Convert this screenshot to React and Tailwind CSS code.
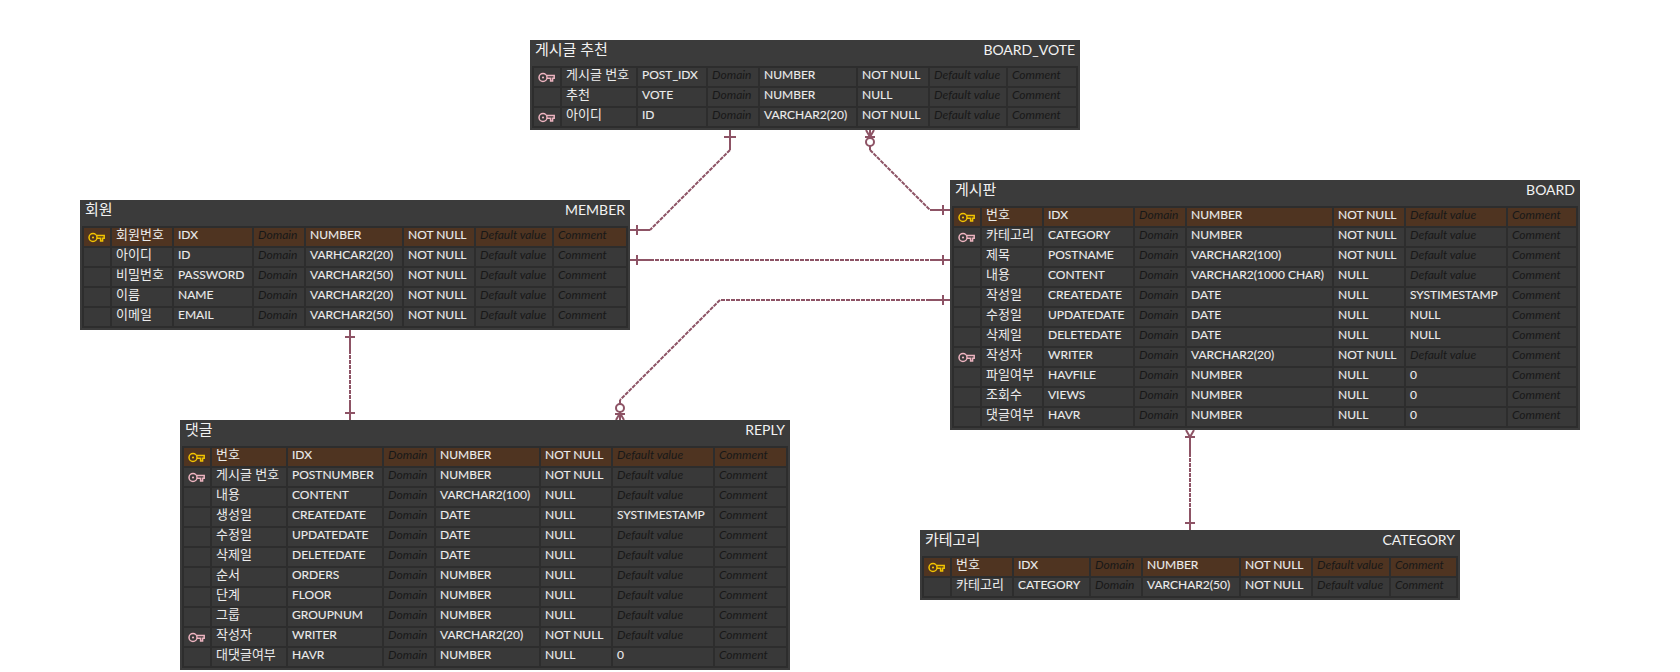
const tables = [
  {
    title: '게시글 추천', name: 'BOARD_VOTE', pos: 'left-[530px] top-[40px] w-[550px]',
    cols: 'grid-cols-[26px_74px_68px_50px_96px_70px_76px_68px]',
    rows: [
      ['fk', '게시글 번호', 'POST_IDX', 'NUMBER', 'NOT NULL'],
      ['', '추천', 'VOTE', 'NUMBER', 'NULL'],
      ['fk', '아이디', 'ID', 'VARCHAR2(20)', 'NOT NULL'],
    ],
  },
  {
    title: '회원', name: 'MEMBER', pos: 'left-[80px] top-[200px] w-[550px]',
    cols: 'grid-cols-[26px_60px_78px_50px_96px_70px_76px_72px]',
    rows: [
      ['pk', '회원번호', 'IDX', 'NUMBER', 'NOT NULL'],
      ['', '아이디', 'ID', 'VARHCAR2(20)', 'NOT NULL'],
      ['', '비밀번호', 'PASSWORD', 'VARCHAR2(50)', 'NOT NULL'],
      ['', '이름', 'NAME', 'VARCHAR2(20)', 'NOT NULL'],
      ['', '이메일', 'EMAIL', 'VARCHAR2(50)', 'NOT NULL'],
    ],
  },
  {
    title: '게시판', name: 'BOARD', pos: 'left-[950px] top-[180px] w-[630px]',
    cols: 'grid-cols-[26px_60px_89px_50px_145px_70px_100px_68px]',
    rows: [
      ['pk', '번호', 'IDX', 'NUMBER', 'NOT NULL'],
      ['fk', '카테고리', 'CATEGORY', 'NUMBER', 'NOT NULL'],
      ['', '제목', 'POSTNAME', 'VARCHAR2(100)', 'NOT NULL'],
      ['', '내용', 'CONTENT', 'VARCHAR2(1000 CHAR)', 'NULL'],
      ['', '작성일', 'CREATEDATE', 'DATE', 'NULL', 'SYSTIMESTAMP'],
      ['', '수정일', 'UPDATEDATE', 'DATE', 'NULL', 'NULL'],
      ['', '삭제일', 'DELETEDATE', 'DATE', 'NULL', 'NULL'],
      ['fk', '작성자', 'WRITER', 'VARCHAR2(20)', 'NOT NULL'],
      ['', '파일여부', 'HAVFILE', 'NUMBER', 'NULL', '0'],
      ['', '조회수', 'VIEWS', 'NUMBER', 'NULL', '0'],
      ['', '댓글여부', 'HAVR', 'NUMBER', 'NULL', '0'],
    ],
  },
  {
    title: '댓글', name: 'REPLY', pos: 'left-[180px] top-[420px] w-[610px]',
    cols: 'grid-cols-[26px_74px_94px_50px_103px_70px_100px_71px]',
    rows: [
      ['pk', '번호', 'IDX', 'NUMBER', 'NOT NULL'],
      ['fk', '게시글 번호', 'POSTNUMBER', 'NUMBER', 'NOT NULL'],
      ['', '내용', 'CONTENT', 'VARCHAR2(100)', 'NULL'],
      ['', '생성일', 'CREATEDATE', 'DATE', 'NULL', 'SYSTIMESTAMP'],
      ['', '수정일', 'UPDATEDATE', 'DATE', 'NULL'],
      ['', '삭제일', 'DELETEDATE', 'DATE', 'NULL'],
      ['', '순서', 'ORDERS', 'NUMBER', 'NULL'],
      ['', '단계', 'FLOOR', 'NUMBER', 'NULL'],
      ['', '그룹', 'GROUPNUM', 'NUMBER', 'NULL'],
      ['fk', '작성자', 'WRITER', 'VARCHAR2(20)', 'NOT NULL'],
      ['', '대댓글여부', 'HAVR', 'NUMBER', 'NULL', '0'],
    ],
  },
  {
    title: '카테고리', name: 'CATEGORY', pos: 'left-[920px] top-[530px] w-[540px]',
    cols: 'grid-cols-[26px_60px_75px_50px_96px_70px_76px_65px]',
    rows: [
      ['pk', '번호', 'IDX', 'NUMBER', 'NOT NULL'],
      ['', '카테고리', 'CATEGORY', 'VARCHAR2(50)', 'NOT NULL'],
    ],
  },
];

function KeyIcon({ color }) {
  return (
    <svg className="-ml-[2px]" width="17" height="11" viewBox="0 0 17 11" fill="none" stroke={color} strokeWidth="1.5">
      <circle cx="5" cy="5.5" r="4" />
      <circle cx="5" cy="5.5" r="1.1" fill={color} stroke="none" />
      <path d="M9 3.6H16.2V6.2H14.6V9H12.6V6.2H9" />
    </svg>
  );
}

function Cell({ bg, className = '', children }) {
  return <div className={`h-[18px] whitespace-nowrap pl-[4px] ${bg} ${className}`}>{children}</div>;
}

function Row({ row, cols }) {
  const [key, label, column, type, nullable, defaultValue] = row;
  const bg = key === 'pk' ? 'bg-[#4f3421]' : 'bg-[#393939]';
  const value = 'text-[12px] leading-[14px] text-[#ececec] [-webkit-text-stroke:0.1px_#ececec]';
  const hint = 'text-[12px] leading-[14px] italic text-[#181818]';

  return (
    <div className={`grid gap-x-[2px] ${cols}`}>
      <div className={`flex h-[18px] items-center justify-center ${bg}`}>
        {key === 'pk' && <KeyIcon color="#f2c200" />}
        {key === 'fk' && <KeyIcon color="#eeb4c0" />}
      </div>
      <Cell bg={bg} className="text-[13px] leading-[12px] text-[#ececec]">{label}</Cell>
      <Cell bg={bg} className={value}>{column}</Cell>
      <Cell bg={bg} className={hint}>Domain</Cell>
      <Cell bg={bg} className={value}>{type}</Cell>
      <Cell bg={bg} className={value}>{nullable}</Cell>
      {defaultValue
        ? <Cell bg={bg} className={value}>{defaultValue}</Cell>
        : <Cell bg={bg} className={hint}>Default value</Cell>}
      <Cell bg={bg} className={hint}>Comment</Cell>
    </div>
  );
}

function EntityTable({ table }) {
  return (
    <div className={`absolute bg-[#3b3b3b] ${table.pos}`}>
      <div className="flex h-[26px] justify-between px-[5px] pt-[1px] text-[#f2f2f2]">
        <span className="text-[15px] leading-[16px]">{table.title}</span>
        <span className="text-[14px] leading-[18px]">{table.name}</span>
      </div>
      <div className="mx-[2px] mb-[2px] flex flex-col gap-y-[2px] bg-[#2d2d2d] p-[2px]">
        {table.rows.map((row) => <Row key={row[2]} row={row} cols={table.cols} />)}
      </div>
    </div>
  );
}

const LINE = '#8d5365';

// solid stubs at both ends, dashed through the middle
function Relation({ solid, dashed }) {
  return (
    <g fill="none" stroke={LINE} strokeWidth="2">
      {solid.map((d) => <path key={d} d={d} />)}
      <path d={dashed} strokeDasharray="4 1" />
    </g>
  );
}

function Connectors() {
  return (
    <svg className="absolute inset-0" width="1680" height="672" viewBox="0 0 1680 672">
      {/* vote - member */}
      <Relation
        solid={['M730 130V150', 'M724 137H736', 'M630 230H650', 'M637 225V235']}
        dashed="M730 150L650 230"
      />
      {/* vote - board */}
      <Relation
        solid={['M870 130V137', 'M865 137H875', 'M866 130L870 137L874 130', 'M870 146V150', 'M930 210H950', 'M943 205V215']}
        dashed="M870 150L930 210"
      />
      <circle cx="870" cy="142" r="4" fill="white" stroke={LINE} strokeWidth="2" />
      {/* member - board */}
      <Relation
        solid={['M630 260H650', 'M637 255V265', 'M930 260H950', 'M943 255V265']}
        dashed="M650 260H930"
      />
      {/* reply - board */}
      <Relation
        solid={['M930 300H950', 'M943 295V305', 'M620 400V404', 'M620 412V420', 'M615 414H625', 'M616 420L620 413L624 420']}
        dashed="M930 300H720L620 400"
      />
      <circle cx="620" cy="408" r="4" fill="white" stroke={LINE} strokeWidth="2" />
      {/* member - reply */}
      <Relation
        solid={['M350 330V350', 'M345 337H355', 'M350 400V420', 'M345 413H355']}
        dashed="M350 350V400"
      />
      {/* board - category */}
      <Relation
        solid={['M1190 437V453', 'M1185 437H1195', 'M1186 430L1190 437L1194 430', 'M1190 510V530', 'M1185 523H1195']}
        dashed="M1190 453V510"
      />
    </svg>
  );
}

export default function App() {
  return (
    <div className="relative h-[672px] w-[1680px] overflow-hidden bg-white font-['Lato','Noto_Sans_CJK_KR',sans-serif]">
      <Connectors />
      {tables.map((table) => <EntityTable key={table.name} table={table} />)}
    </div>
  );
}
